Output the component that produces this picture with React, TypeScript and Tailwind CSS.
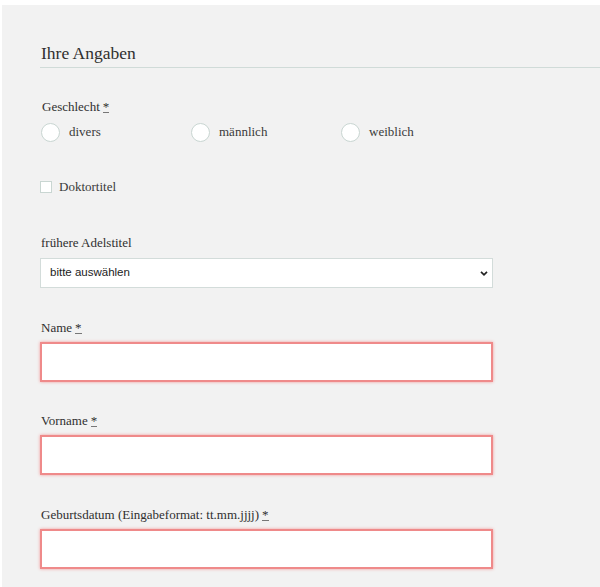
import React from "react";

const serif = "font-['Liberation_Serif',serif]";

function Req() {
  return <span className="ml-[3px] border-b border-[#777] leading-[10px] inline-block">*</span>;
}

function Label({ children }: { children: React.ReactNode }) {
  return <div className={`${serif} text-[13px] leading-[18px] text-[#2f2f2f]`}>{children}</div>;
}

function Radio({ label }: { label: string }) {
  return (
    <label className="flex items-center w-[150px] h-[20px]">
      <span className="w-[19px] h-[19px] rounded-full bg-white border border-[#c9d6d2]" />
      <span className={`${serif} ml-[9px] text-[13px] text-[#3a3a3a]`}>{label}</span>
    </label>
  );
}

function RedInput() {
  return (
    <div className="w-[453px] h-[40px] bg-white border-2 border-[#ef8a8a] shadow-[0_0_3px_#f29a9a]" />
  );
}

export default function App() {
  return (
    <div className="bg-white pt-[5px] pl-[2px] w-[600px] h-[587px] overflow-hidden">
      <div className="bg-[#f2f2f2] h-[582px] pt-[36px] pl-[38px]">
        <div className={`${serif} text-[17.5px] leading-[24px] text-[#2f2f2f] pl-[1px] pb-[2px] border-b border-[#d0dbd8]`}>
          Ihre Angaben
        </div>

        <div className="mt-[30px] pl-[2px]">
          <Label>
            Geschlecht<Req />
          </Label>
        </div>
        <div className="mt-[6px] flex pl-[1px]">
          <Radio label="divers" />
          <Radio label="männlich" />
          <Radio label="weiblich" />
        </div>

        <div className="mt-[35px] flex items-center h-[20px]">
          <span className="w-[12px] h-[12px] bg-white border border-[#c9d6d2]" />
          <span className={`${serif} ml-[7px] text-[13px] text-[#3a3a3a]`}>Doktortitel</span>
        </div>

        <div className="mt-[37px] pl-[1px]">
          <Label>frühere Adelstitel</Label>
        </div>
        <div className="mt-[6px] w-[453px] h-[30px] bg-white border border-[#d3dcda] flex items-center justify-between pl-[9px] pr-[4px]">
          <span className="font-['Liberation_Sans',sans-serif] text-[11.5px] text-[#222]">bitte auswählen</span>
          <svg width="8" height="5" viewBox="0 0 8 5">
            <path d="M1 0.8 L4 3.8 L7 0.8" fill="none" stroke="#222" strokeWidth="1.7" />
          </svg>
        </div>

        <div className="mt-[31px] pl-[1px]">
          <Label>
            Name<Req />
          </Label>
        </div>
        <div className="mt-[5px]">
          <RedInput />
        </div>

        <div className="mt-[30px] pl-[1px]">
          <Label>
            Vorname<Req />
          </Label>
        </div>
        <div className="mt-[5px]">
          <RedInput />
        </div>

        <div className="mt-[31px] pl-[1px]">
          <Label>
            Geburtsdatum (Eingabeformat: tt.mm.jjjj)<Req />
          </Label>
        </div>
        <div className="mt-[5px]">
          <RedInput />
        </div>
      </div>
    </div>
  );
}
